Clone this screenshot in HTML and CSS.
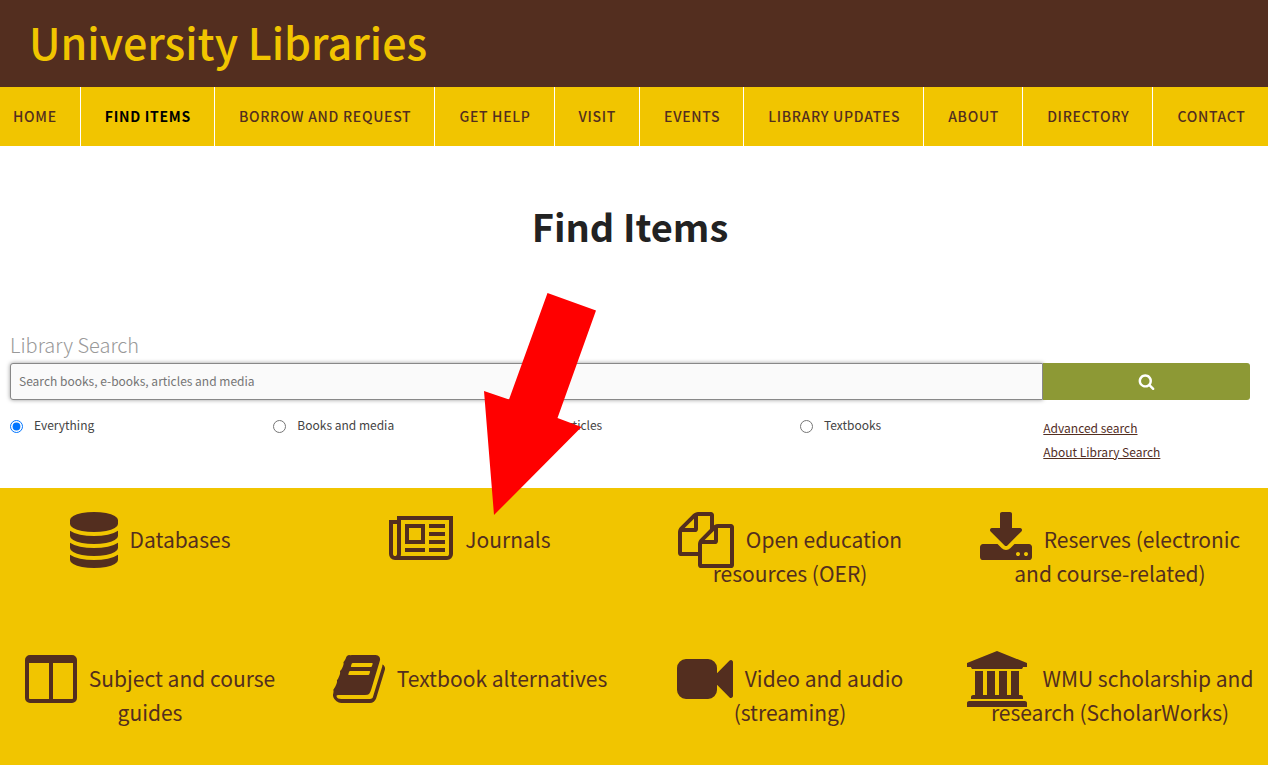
FILE: index.html
```html
<!DOCTYPE html>
<html lang="en">

<head>
  <meta charset="UTF-8">
  <meta name="viewport" content="width=device-width, initial-scale=1">
  <title>Find Items | University Libraries</title>
  <link rel="stylesheet" href="styles.css">
</head>

<body>

  <header class="site-header">
    <a class="site-title" href="#">University Libraries</a>
  </header>

  <nav class="main-nav">
    <a href="#">Home</a>
    <a href="#" class="active">Find Items</a>
    <a href="#">Borrow and Request</a>
    <a href="#">Get Help</a>
    <a href="#">Visit</a>
    <a href="#">Events</a>
    <a href="#">Library Updates</a>
    <a href="#">About</a>
    <a href="#">Directory</a>
    <a href="#">Contact</a>
  </nav>

  <main>
    <h1>Find Items</h1>

    <form class="search">
      <label class="search-label" for="query">Library Search</label>
      <div class="search-grid">
        <input class="search-box" type="text" id="query" placeholder="Search books, e-books, articles and media">
        <button class="search-button" type="submit" aria-label="Search">
          <svg viewBox="0 0 1792 1792"><path d="M1216 832q0-185-131.500-316.500t-316.500-131.500-316.500 131.500-131.500 316.500 131.500 316.500 316.500 131.500 316.500-131.500 131.500-316.500zm512 832q0 52-38 90t-90 38q-54 0-90-38l-343-342q-179 124-399 124-143 0-273.500-55.500t-225-150-150-225-55.500-273.500 55.500-273.500 150-225 225-150 273.500-55.500 273.500 55.500 225 150 150 225 55.500 273.500q0 220-124 399l343 343q37 37 37 90z"/></svg>
        </button>
        <div class="scopes">
          <label><input type="radio" name="scope" checked>Everything</label>
          <label><input type="radio" name="scope">Books and media</label>
          <label><input type="radio" name="scope">Articles</label>
          <label><input type="radio" name="scope">Textbooks</label>
        </div>
        <div class="search-links">
          <a href="#">Advanced search</a>
          <a href="#">About Library Search</a>
        </div>
      </div>
    </form>

    <section class="tiles">
      <a class="tile" href="#"><svg class="icon w48" viewBox="128 0 1536 1792"><path d="M896 768q237 0 443-43t325-127v170q0 69-103 128t-280 93.500-385 34.500-385-34.500-280-93.500-103-128v-170q119 84 325 127t443 43zm0 768q237 0 443-43t325-127v170q0 69-103 128t-280 93.500-385 34.500-385-34.500-280-93.500-103-128v-170q119 84 325 127t443 43zm0-384q237 0 443-43t325-127v170q0 69-103 128t-280 93.500-385 34.500-385-34.500-280-93.500-103-128v-170q119 84 325 127t443 43zm0-1152q208 0 385 34.500t280 93.500 103 128v128q0 69-103 128t-280 93.500-385 34.500-385-34.500-280-93.500-103-128v-128q0-69 103-128t280-93.500 385-34.500z"/></svg>Databases</a>

      <a class="tile" href="#"><svg class="icon w64" viewBox="0 0 2048 1792"><path d="M1024 512h-384v384h384v-384zm128 640v128h-640v-128h640zm0-768v640h-640v-640h640zm640 768v128h-512v-128h512zm0-256v128h-512v-128h512zm0-256v128h-512v-128h512zm0-256v128h-512v-128h512zm-1536 960v-960h-128v960q0 26 19 45t45 19 45-19 19-45zm1664 0v-1088h-1536v1088q0 33-11 64h1483q26 0 45-19t19-45zm128-1216v1216q0 80-56 136t-136 56h-1664q-80 0-136-56t-56-136v-1088h256v-128h1792z"/></svg>Journals</a>

      <a class="tile" href="#"><svg class="icon w56" viewBox="0 0 1792 1792"><path d="M1696 384q40 0 68 28t28 68v1216q0 40-28 68t-68 28h-960q-40 0-68-28t-28-68v-288h-544q-40 0-68-28t-28-68v-672q0-40 20-88t48-76l408-408q28-28 76-48t88-20h416q40 0 68 28t28 68v328q68-40 128-40h416zm-544 213l-299 299h299v-299zm-640-384l-299 299h299v-299zm196 647l316-316v-416h-384v416q0 40-28 68t-68 28h-416v640h512v-256q0-40 20-88t48-76zm956 804v-1152h-384v416q0 40-28 68t-68 28h-416v640h896z"/></svg>Open education resources (OER)</a>

      <a class="tile" href="#"><svg class="icon w52" viewBox="64 0 1664 1792"><path d="M1344 1344q0-26-19-45t-45-19-45 19-19 45 19 45 45 19 45-19 19-45zm256 0q0-26-19-45t-45-19-45 19-19 45 19 45 45 19 45-19 19-45zm128-224v320q0 40-28 68t-68 28h-1472q-40 0-68-28t-28-68v-320q0-40 28-68t68-28h465l135 136q58 56 136 56t136-56l136-136h464q40 0 68 28t28 68zm-325-569q17 41-14 70l-448 448q-18 19-45 19t-45-19l-448-448q-31-29-14-70 17-39 59-39h256v-448q0-26 19-45t45-19h256q26 0 45 19t19 45v448h256q42 0 59 39z"/></svg>Reserves (electronic and course-related)</a>

      <a class="tile" href="#"><svg class="icon w52" viewBox="64 0 1664 1792"><path d="M224 1536h608v-1152h-640v1120q0 13 9.500 22.500t22.500 9.500zm1376-32v-1120h-640v1152h608q13 0 22.500-9.500t9.500-22.500zm128-1216v1216q0 66-47 113t-113 47h-1344q-66 0-113-47t-47-113v-1216q0-66 47-113t113-47h1344q66 0 113 47t47 113z"/></svg>Subject and course guides</a>

      <a class="tile" href="#"><svg class="icon w52" viewBox="64 0 1664 1792"><path d="M1703 478q40 57 18 129l-275 906q-19 64-76.500 107.500t-122.500 43.500h-923q-77 0-148.500-53.500t-99.500-131.500q-24-67-2-127 0-4 3-27t4-37q1-8-3-21.500t-3-19.500q2-11 8-21t16.500-23.500 16.500-23.500q23-38 45-91.500t30-91.500q3-10 .5-30t-.5-28q3-11 17-28t17-23q21-36 42-92t25-90q1-9-2.500-32t.5-28q4-13 22-30.500t22-22.500q19-26 42.500-84.500t27.500-96.500q1-8-3-25.500t-2-26.500q2-8 9-18t18-23 17-21q8-12 16.500-30.500t15-35 16-36 19.500-32 26.500-23.500 36-11.500 47.500 5.500l-1 3q38-9 51-9h761q74 0 114 56t18 130l-274 906q-36 119-71.500 153.500t-128.500 34.500h-869q-27 0-38 15-11 16-1 43 24 70 144 70h923q29 0 56-15.500t35-41.500l300-987q7-22 5-57 38 15 59 43zm-1064 2q-4 13 2 22.500t20 9.500h608q13 0 25.500-9.500t16.500-22.500l21-64q4-13-2-22.500t-20-9.500h-608q-13 0-25.500 9.500t-16.500 22.500zm-83 256q-4 13 2 22.500t20 9.500h608q13 0 25.500-9.500t16.500-22.500l21-64q4-13-2-22.500t-20-9.500h-608q-13 0-25.500 9.500t-16.500 22.500z"/></svg>Textbook alternatives</a>

      <a class="tile" href="#"><svg class="icon w56" viewBox="0 0 1792 1792"><path d="M1792 352v1088q0 42-39 59-13 5-25 5-27 0-45-19l-403-403v166q0 119-84.500 203.500t-203.500 84.500h-704q-119 0-203.500-84.500t-84.500-203.500v-704q0-119 84.500-203.500t203.500-84.500h704q119 0 203.500 84.500t84.500 203.500v165l403-402q18-19 45-19 12 0 25 5 39 17 39 59z"/></svg>Video and audio (streaming)</a>

      <a class="tile" href="#"><svg class="icon w64" viewBox="0 0 2048 1792"><path d="M960 0l960 384v128h-128q0 26-20.500 45t-48.500 19h-1526q-28 0-48.500-19t-20.500-45h-128v-128zm-704 640h256v768h128v-768h256v768h128v-768h256v768h128v-768h256v768h59q28 0 48.500 19t20.500 45v64h-1664v-64q0-26 20.500-45t48.500-19h59v-768zm1595 960q28 0 48.500 19t20.500 45v128h-1920v-128q0-26 20.500-45t48.500-19h1782z"/></svg>WMU scholarship and research (ScholarWorks)</a>
    </section>

    <!-- Arrow pointing at the Journals tile -->
    <svg class="pointer" viewBox="0 0 113 223"><path d="M63.500 0L112 17.500 73.500 125 97.500 134 10 222 0 98 25 106.500z"/></svg>
  </main>

</body>

</html>
```
FILE: styles.css
```css
body {
  margin: 0;
  background: #fff;
  color: #444;
  font-family: "Noto Sans CJK SC", "Noto Sans", sans-serif;
  font-size: 12px;
  overflow-x: hidden;
}

.site-header {
  padding: 12px 29px 16px;
  background: #532e1f;
}

.site-title {
  display: block;
  color: #f1c500;
  font-size: 43px;
  font-weight: 500;
  line-height: 59px;
  text-decoration: none;
}

/* Navigation */
.main-nav {
  display: flex;
  background: #f1c500;
}

.main-nav a {
  padding: 0 23px 0 24px;
  border-right: 1px solid #fff;
  color: #532e1f;
  font-size: 14px;
  font-weight: 500;
  line-height: 59px;
  letter-spacing: 0.05em;
  text-decoration: none;
  text-transform: uppercase;
  white-space: nowrap;
}

.main-nav a:first-child {
  padding-left: 13px;
}

.main-nav a:last-child {
  border-right: none;
}

.main-nav .active {
  color: #000;
  font-weight: 700;
}

main {
  position: relative;
}

h1 {
  margin: 0;
  padding: 50px 8px 73px 0;
  color: #222;
  font-size: 38px;
  font-weight: 700;
  line-height: 60px;
  text-align: center;
}

/* Search form */
.search {
  padding: 0 18px 24px 10px;
}

.search-label {
  display: block;
  padding-bottom: 3px;
  color: #999;
  font-size: 20px;
  font-weight: 300;
  line-height: 31px;
}

.search-grid {
  display: grid;
  grid-template-columns: 5fr 1fr;
}

.search-box {
  box-sizing: border-box;
  width: 100%;
  height: 37px;
  padding: 0 8px 2px;
  border: 1px solid #888;
  border-radius: 3px 0 0 3px;
  background: #fafafa;
  box-shadow: 0 0 4px rgba(0, 0, 0, 0.4);
  font-family: inherit;
  font-size: 12px;
}

.search-box::placeholder {
  color: #757575;
}

.search-button {
  z-index: 1;
  display: flex;
  justify-content: center;
  align-items: center;
  padding: 0;
  border: none;
  border-radius: 0 3px 3px 0;
  background: #8d9935;
  cursor: pointer;
}

.search-button svg {
  width: 17px;
  height: 17px;
  fill: #fff;
}

.scopes {
  display: grid;
  grid-template-columns: repeat(4, 1fr);
  gap: 20px;
  align-items: start;
  padding-top: 15px;
}

.scopes label {
  display: flex;
  align-items: center;
  line-height: 20px;
}

.scopes input {
  width: 13px;
  height: 13px;
  margin: 2px 11px 0 0;
}

.search-links {
  display: flex;
  flex-direction: column;
  align-items: flex-start;
  padding-top: 16px;
}

.search-links a {
  color: #532e1f;
  line-height: 24px;
}

/* Tiles */
.tiles {
  display: grid;
  grid-template-columns: repeat(4, 1fr);
  row-gap: 71px;
  margin: 0 -2px 0 -10px;
  padding: 34px 0 36px;
  background: #f1c500;
}

.tile {
  padding: 0 10px;
  color: #532e1f;
  font-size: 21px;
  line-height: 34px;
  text-align: center;
  text-decoration: none;
}

/* Negative margins keep the tall icons from stretching the text line */
.icon {
  height: 56px;
  margin: -14px 12px -14px 0;
  vertical-align: -6px;
  fill: #532e1f;
}

.w48 { width: 48px; }
.w52 { width: 52px; }
.w56 { width: 56px; }
.w64 { width: 64px; }

.pointer {
  position: absolute;
  top: 147px;
  left: 484px;
  width: 113px;
  height: 223px;
  fill: #f00;
}
```
